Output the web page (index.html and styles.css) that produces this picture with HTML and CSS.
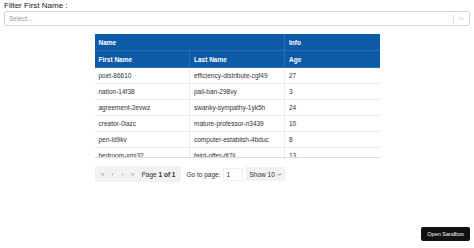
FILE: index.html
```html
<!DOCTYPE html>
<html lang="en">
<head>
    <meta charset="UTF-8">
    <title>Table Filter</title>
    <link rel="stylesheet" href="styles.css">
</head>
<body>
    <div class="filter">
        <label class="filter-label">Filter First Name :</label>
        <div class="select-box">
            <span class="placeholder">Select...</span>
            <span class="indicators">
                <span class="sep"></span>
                <svg width="7" height="7" viewBox="0 0 20 20"><path d="M4.5 7.5l5.5 5.5 5.5-5.5" fill="none" stroke="#bbb" stroke-width="2.4"/></svg>
            </span>
        </div>
    </div>

    <div class="table-area">
        <div class="table-wrap">
            <table>
                <thead>
                    <tr>
                        <th colspan="2">Name</th>
                        <th>Info</th>
                    </tr>
                    <tr>
                        <th>First Name</th>
                        <th>Last Name</th>
                        <th>Age</th>
                    </tr>
                </thead>
                <tbody>
                    <tr><td>poet-86610</td><td>efficiency-distribute-cgf49</td><td>27</td></tr>
                    <tr><td>nation-14f38</td><td>pail-ban-298vy</td><td>3</td></tr>
                    <tr><td>agreement-2evwz</td><td>swanky-sympathy-1yk5h</td><td>24</td></tr>
                    <tr><td>creator-0iazc</td><td>mature-professor-n3439</td><td>10</td></tr>
                    <tr><td>pen-ld9kv</td><td>computer-establish-4bduc</td><td>8</td></tr>
                    <tr><td>bedroom-xmi32</td><td>faint-offer-dt7ji</td><td>13</td></tr>
                    <tr><td>shirt-3kq8x</td><td>bright-river-7hd2m</td><td>19</td></tr>
                </tbody>
            </table>
        </div>

        <div class="pagination">
            <div class="pager">
                <button>&laquo;</button>
                <button>&lsaquo;</button>
                <button>&rsaquo;</button>
                <button>&raquo;</button>
                <span class="page-info">Page <b>1 of 1</b></span>
            </div>
            <span class="goto">Go to page:</span>
            <input class="page-input" type="text" value="1">
            <span class="show">Show 10
                <svg width="5" height="5" viewBox="0 0 10 10"><path d="M2 3.5l3 3 3-3" fill="none" stroke="#444" stroke-width="1.4"/></svg>
            </span>
        </div>
    </div>

    <button class="sandbox">Open Sandbox</button>
</body>
</html>
```

FILE: styles.css
```css
body {
    margin: 0;
    padding: 0 4px;
    font-family: "Liberation Sans", Arial, sans-serif;
    background: #fff;
    color: #333;
    height: 248px;
    position: relative;
    overflow: hidden;
}
.filter-label {
    display: block;
    font-size: 8px;
    color: #222;
    line-height: 9px;
    padding-top: 1px;
}
.select-box {
    margin-top: 1px;
    height: 13px;
    border: 1px solid #d6d6d6;
    border-radius: 2px;
    display: flex;
    align-items: center;
    justify-content: space-between;
    padding-left: 4px;
}
.placeholder {
    font-size: 6.5px;
    color: #999;
}
.indicators {
    display: flex;
    align-items: center;
    gap: 4px;
    padding-right: 4px;
}
.sep {
    width: 1px;
    height: 8px;
    background: #ddd;
}
.indicators svg {
    display: block;
}
.table-area {
    width: 285px;
    margin: 8px auto 0;
}
.table-wrap {
    height: 123px;
    overflow: hidden;
    border-bottom: 1px solid #ddd;
}
table {
    width: 100%;
    border-collapse: collapse;
    table-layout: fixed;
    font-size: 6.5px;
}
th {
    background: #0d5aa7;
    color: #fff;
    font-weight: bold;
    text-align: left;
    height: 16px;
    padding: 0 4px;
    border-bottom: 1px solid #2a6fb6;
}
thead tr:first-child th + th {
    border-left: 1px solid #2a6fb6;
}
thead tr:last-child th + th {
    border-left: 1px solid #2a6fb6;
}
td {
    height: 15px;
    padding: 0 4px;
    color: #333;
    border-bottom: 1px solid #eee;
}
td + td {
    border-left: 1px solid #eee;
}
.pagination {
    display: flex;
    align-items: center;
    margin-top: 8px;
    font-size: 6.5px;
    color: #333;
}
.pager {
    display: flex;
    align-items: center;
    background: #f2f2f2;
    height: 16px;
    padding: 0 6px 0 3px;
}
.pager button {
    flex-shrink: 0;
    border: none;
    background: transparent;
    color: #aaa;
    font-size: 6.5px;
    height: 12px;
    padding: 0;
    width: 10px;
    font-family: inherit;
}
.page-info {
    margin-left: 4px;
    font-size: 6.5px;
    color: #333;
    white-space: nowrap;
}
.goto {
    margin-left: 5px;
}
.page-input {
    width: 20px;
    height: 13px;
    box-sizing: border-box;
    border: 1px solid #f0f0f0;
    font-size: 6.5px;
    padding: 0 0 0 2px;
    margin-left: 3px;
    color: #333;
    font-family: inherit;
}
.show {
    display: flex;
    align-items: center;
    gap: 2px;
    background: #f2f2f2;
    height: 14px;
    padding: 0 3px;
    margin-left: 3px;
}
.sandbox {
    position: absolute;
    right: 4px;
    bottom: 7px;
    background: #111;
    color: #fff;
    border: none;
    border-radius: 2px;
    font-family: inherit;
    font-size: 5.5px;
    height: 14px;
    padding: 0 6px;
}
```
